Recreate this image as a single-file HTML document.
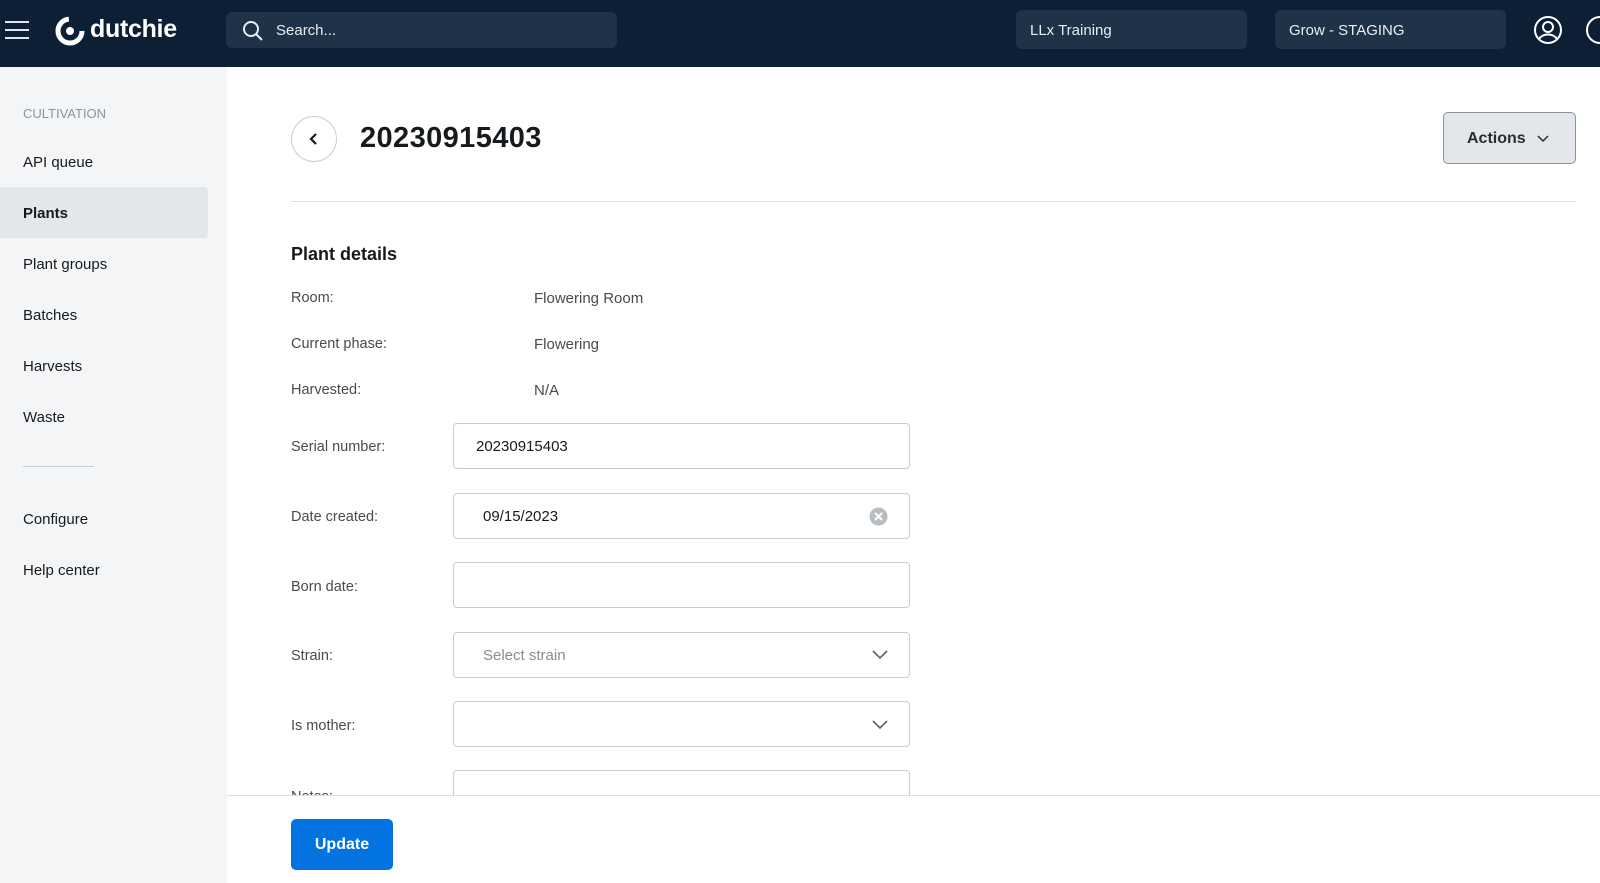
<!DOCTYPE html>
<html><head><meta charset="utf-8"><style>
*{box-sizing:border-box;margin:0;padding:0}
body{width:1600px;height:883px;overflow:hidden;font-family:"Liberation Sans",sans-serif;background:#fff;position:relative;color:#171a1c}
.hdr{position:absolute;left:0;top:0;width:1600px;height:67px;background:#0c1f35}
.abs{position:absolute}
.box{position:absolute;background:#203248;border-radius:6px;color:#e8edf2;font-size:15px;line-height:42px}
.side{position:absolute;left:0;top:67px;width:227px;height:816px;background:#f4f5f7}
.nav{position:absolute;left:23px;font-size:15px;color:#171a1c}
.lbl{position:absolute;left:291px;font-size:14.5px;color:#464b50}
.val{position:absolute;left:534px;font-size:15px;color:#464b50}
.inp{position:absolute;left:453px;width:457px;height:46px;border:1px solid #c9cdd2;border-radius:4px;background:#fff;font-size:15px;line-height:46px}
</style></head><body>
<div class="hdr"></div>
<svg class="abs" style="left:5px;top:20px" width="24" height="20"><path d="M0 2h24M0 10h24M0 18h24" stroke="#dfe5ec" stroke-width="2"/></svg>
<svg class="abs" style="left:55px;top:16px" width="30" height="30" viewBox="0 0 30 30"><circle cx="15" cy="15" r="12" fill="none" stroke="#fff" stroke-width="5" stroke-dasharray="55 20"/><circle cx="15" cy="15" r="4" fill="#fff"/></svg>
<div class="abs" style="left:90px;top:15px;color:#fff;font-size:25px;font-weight:bold;letter-spacing:-0.3px">dutchie</div>
<div class="box" style="left:226px;top:12px;width:391px;height:36px;line-height:38px;padding-left:50px">Search...</div>
<svg class="abs" style="left:242px;top:20px" width="22" height="22"><circle cx="9" cy="9" r="7" fill="none" stroke="#e8edf2" stroke-width="2"/><path d="M14 14l6 6" stroke="#e8edf2" stroke-width="2"/></svg>
<div class="box" style="left:1016px;top:10px;width:231px;height:39px;padding-left:14px">LLx Training</div>
<div class="box" style="left:1275px;top:10px;width:231px;height:39px;padding-left:14px">Grow - STAGING</div>
<svg class="abs" style="left:1533px;top:15px" width="30" height="30"><circle cx="15" cy="15" r="13" fill="none" stroke="#fff" stroke-width="2"/><circle cx="15" cy="12" r="5" fill="none" stroke="#fff" stroke-width="2"/><path d="M6 24c4-6 14-6 18 0" fill="none" stroke="#fff" stroke-width="2"/></svg>
<svg class="abs" style="left:1585px;top:15px" width="15" height="30"><circle cx="15" cy="15" r="13" fill="none" stroke="#fff" stroke-width="2"/></svg>

<div class="side"></div>
<div class="nav" style="top:106px;font-size:13px;color:#8c9399">CULTIVATION</div>
<div class="nav" style="top:154px">API queue</div>
<div class="abs" style="left:0;top:187px;width:208px;height:51px;background:#e3e6ea;border-radius:0 4px 4px 0"></div>
<div class="nav" style="top:205px;font-weight:bold">Plants</div>
<div class="nav" style="top:256px">Plant groups</div>
<div class="nav" style="top:307px">Batches</div>
<div class="nav" style="top:358px">Harvests</div>
<div class="nav" style="top:409px">Waste</div>
<div class="abs" style="left:23px;top:466px;width:71px;height:1px;background:#c9cdd2"></div>
<div class="nav" style="top:511px">Configure</div>
<div class="nav" style="top:562px">Help center</div>

<div class="abs" style="left:291px;top:116px;width:46px;height:46px;border:1px solid #c9cdd2;border-radius:50%"></div>
<svg class="abs" style="left:307px;top:132px" width="14" height="14"><path d="M9 2L4 7l5 5" fill="none" stroke="#171a1c" stroke-width="2.2"/></svg>
<div class="abs" style="left:360px;top:122px;font-size:29px;font-weight:bold;letter-spacing:0.4px">20230915403</div>
<div class="abs" style="left:1443px;top:112px;width:133px;height:52px;border:1px solid #8c9399;border-radius:5px;background:#e3e6ea;font-size:16px;font-weight:bold;line-height:52px;padding-left:23px;color:#2a2e32">Actions</div>
<svg class="abs" style="left:1537px;top:135px" width="12" height="8"><path d="M1 1l5 5 5-5" fill="none" stroke="#2a2e32" stroke-width="1.5"/></svg>
<div class="abs" style="left:291px;top:201px;width:1285px;height:1px;background:#dde0e3"></div>
<div class="abs" style="left:291px;top:244px;font-size:18px;font-weight:bold">Plant details</div>
<div class="lbl" style="top:290px">Room:</div><div class="val" style="top:290px">Flowering Room</div>
<div class="lbl" style="top:336px">Current phase:</div><div class="val" style="top:336px">Flowering</div>
<div class="lbl" style="top:382px">Harvested:</div><div class="val" style="top:382px">N/A</div>
<div class="lbl" style="top:439px">Serial number:</div><div class="inp" style="top:423px;padding-left:22px">20230915403</div>
<div class="lbl" style="top:509px">Date created:</div><div class="inp" style="top:493px;padding-left:29px">09/15/2023</div>
<svg class="abs" style="left:869px;top:507px" width="19" height="19"><circle cx="9.5" cy="9.5" r="9" fill="#b8bdc2"/><path d="M6 6l7 7M13 6l-7 7" stroke="#fff" stroke-width="2"/></svg>
<div class="lbl" style="top:579px">Born date:</div><div class="inp" style="top:562px"></div>
<div class="lbl" style="top:648px">Strain:</div><div class="inp" style="top:632px;padding-left:29px;color:#868d94">Select strain</div>
<svg class="abs" style="left:872px;top:650px" width="16" height="10"><path d="M1 1l7 7 7-7" fill="none" stroke="#5b6168" stroke-width="1.6"/></svg>
<div class="lbl" style="top:718px">Is mother:</div><div class="inp" style="top:701px"></div>
<svg class="abs" style="left:872px;top:720px" width="16" height="10"><path d="M1 1l7 7 7-7" fill="none" stroke="#5b6168" stroke-width="1.6"/></svg>
<div class="inp" style="top:770px"></div>
<div class="lbl" style="top:789px">Notes:</div>
<div class="abs" style="left:227px;top:795px;width:1373px;height:88px;background:#fff;border-top:1px solid #dde0e3"></div>
<div class="abs" style="left:291px;top:819px;width:102px;height:51px;background:#0273e0;border-radius:5px;color:#fff;font-size:16px;font-weight:bold;text-align:center;line-height:52px">Update</div>
</body></html>
